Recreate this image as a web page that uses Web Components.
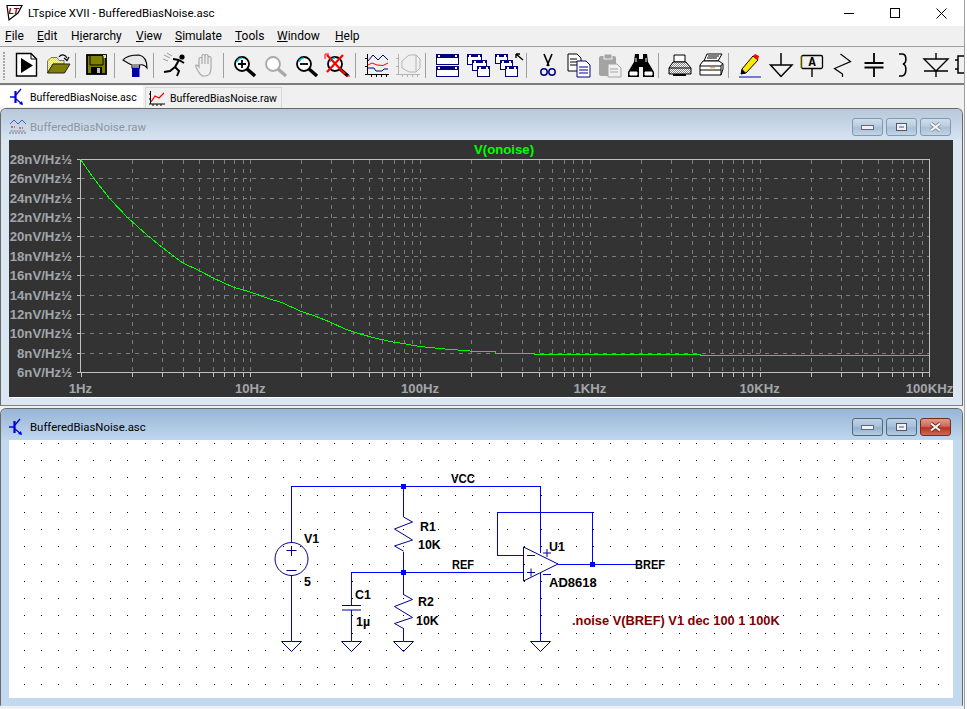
<!DOCTYPE html>
<html>
<head>
<meta charset="utf-8">
<title>LTspice XVII</title>
<style>
    html, body { margin: 0; padding: 0; background: #fff; overflow: hidden; }
    body { font-family: Roboto, "Open Sans", "Noto Sans", sans-serif; font-size: 12px; color: #000; }
</style>
</head>
<body>
<lt-app>
    <lt-titlebar slot="top" caption="LTspice XVII - BufferedBiasNoise.asc"></lt-titlebar>
    <lt-menubar slot="top">
        <lt-menu key="F" rest="ile" w="32"></lt-menu>
        <lt-menu key="E" rest="dit" w="34"></lt-menu>
        <lt-menu pre="H" key="i" rest="erarchy" w="65"></lt-menu>
        <lt-menu key="V" rest="iew" w="39"></lt-menu>
        <lt-menu key="S" rest="imulate" w="60"></lt-menu>
        <lt-menu key="T" rest="ools" w="42"></lt-menu>
        <lt-menu key="W" rest="indow" w="58"></lt-menu>
        <lt-menu key="H" rest="elp" w="36"></lt-menu>
    </lt-menubar>
    <lt-toolbar slot="top">
        <lt-tool icon="run"></lt-tool><lt-tool icon="open"></lt-tool><lt-sep></lt-sep>
        <lt-tool icon="save"></lt-tool><lt-sep></lt-sep>
        <lt-tool icon="hammer"></lt-tool><lt-sep></lt-sep>
        <lt-tool icon="runner"></lt-tool><lt-tool icon="hand"></lt-tool><lt-sep></lt-sep>
        <lt-tool icon="zoomin"></lt-tool><lt-tool icon="zoomgray"></lt-tool><lt-tool icon="zoomout"></lt-tool><lt-tool icon="zoomx"></lt-tool><lt-sep></lt-sep>
        <lt-tool icon="plot"></lt-tool><lt-tool icon="plotgray"></lt-tool><lt-sep></lt-sep>
        <lt-tool icon="tile"></lt-tool><lt-tool icon="cascade"></lt-tool><lt-tool icon="cascadearrow"></lt-tool><lt-sep></lt-sep>
        <lt-tool icon="cut"></lt-tool><lt-tool icon="copy"></lt-tool><lt-tool icon="paste"></lt-tool><lt-tool icon="find"></lt-tool><lt-sep></lt-sep>
        <lt-tool icon="print"></lt-tool><lt-tool icon="printer"></lt-tool><lt-sep></lt-sep>
        <lt-tool icon="pencil"></lt-tool><lt-tool icon="ground"></lt-tool><lt-tool icon="label"></lt-tool><lt-tool icon="res"></lt-tool><lt-tool icon="cap"></lt-tool><lt-tool icon="ind"></lt-tool><lt-tool icon="diode"></lt-tool><lt-tool icon="comp"></lt-tool>
    </lt-toolbar>
    <lt-tabs slot="top">
        <lt-tab active icon="sch" w="143">BufferedBiasNoise.asc</lt-tab>
        <lt-tab icon="wave" w="137">BufferedBiasNoise.raw</lt-tab>
    </lt-tabs>
    <lt-child caption="BufferedBiasNoise.raw" icon="wavefaded">
        <lt-plot></lt-plot>
    </lt-child>
    <lt-child active caption="BufferedBiasNoise.asc" icon="sch">
        <lt-schematic></lt-schematic>
    </lt-child>
</lt-app>

<script>
// small window used by the tile / cascade icons
const win = (x, y, w, h, bar) => `
    <rect x="${x + .5}" y="${y + .5}" width="${w}" height="${h}" fill="#fff" stroke="#000080"/>
    <rect x="${x}" y="${y}" width="${w + 1}" height="${bar}" fill="#000080"/>
    <rect x="${x + 2}" y="${y + 1}" width="2" height="2" fill="#fff"/>
    <rect x="${x + w - 3}" y="${y + 1}" width="2" height="2" fill="#fff"/>`;

const lens = (stroke, inner) => `
    <path d="M14 16L22 23" stroke="${stroke}" stroke-width="3.4" fill="none"/>
    <circle cx="9" cy="11" r="7" fill="#fff" stroke="${stroke}" stroke-width="1.8"/>
    ${inner}`;

const ICONS = {
    run: `<path d="M1.5 .5H16L21.5 6V23H1.5Z" fill="#fff" stroke="#000" stroke-width="1.4"/><path d="M16 .5V6H21.5" fill="none" stroke="#000"/><path d="M6 5L18 12.5L6 20Z" fill="#000"/>`,
    open: `<defs><pattern id="dy" width="2" height="2" patternUnits="userSpaceOnUse"><rect width="2" height="2" fill="#fff"/><rect width="1" height="1" fill="#e8e800"/><rect x="1" y="1" width="1" height="1" fill="#e8e800"/></pattern></defs>
        <path d="M1.5 20V8L5 4.5H11L13 7.5H18V11H7L1.5 20Z" fill="url(#dy)" stroke="#555" stroke-width=".8"/><path d="M1.5 20L7 11H24L18.5 20Z" fill="#808000" stroke="#222"/><path d="M13 4C15 1 19 1 21 5" fill="none" stroke="#000" stroke-width="1.2"/><path d="M18 5L21 7.5L23 4" fill="none" stroke="#000" stroke-width="1.2"/>`,
    save: `<rect x="2" y="2" width="19" height="19" fill="#808000" stroke="#000" stroke-width="1.8"/><rect x="18" y="2" width="3" height="3" fill="#ddd"/><path d="M5 12H18M5 3V12M18 3V12" stroke="#000" fill="none"/><rect x="6" y="14" width="11" height="7" fill="#000"/><rect x="12" y="15" width="3" height="5" fill="#c0c0c0"/>`,
    hammer: `<path d="M-1 7C2 3 8 2 15 2C20 3 23 8 23 15C21 12 19 11 15.5 12V15H8V12C5 11 2 9 -1 7Z" fill="#e8e8e8" stroke="#000" stroke-width="1.1"/><path d="M8.5 11H15V14.5H8.5Z" fill="#909090"/><rect x="8" y="15" width="7.5" height="9" fill="#0000a8"/>`,
    runner: `<g fill="none" stroke="#000" stroke-width="2"><circle cx="19" cy="4" r="1.6" fill="#000"/><path d="M16 7L12 14"/><path d="M16 7L21 10M16 7L10 6"/><path d="M12 14L16 18L14 23M12 14L7 18L1 19"/></g><path d="M1 2L7 5M4 0L9 3M0 6L5 8" stroke="#999" fill="none"/>`,
    hand: `<path d="M5 14V6a1.5 1.5 0 0 1 3 0V11V3a1.5 1.5 0 0 1 3 0V11V3a1.5 1.5 0 0 1 3 0V11V5a1.5 1.5 0 0 1 3 0V15C17 20 15 23 11 23H9C7 23 6 21 4 18L2 14C1 12 3 11 5 14Z" fill="#f0f0f0" stroke="#a8a8a8" stroke-width="1.2"/>`,
    zoomin: lens('#000', `<path d="M4 9A6 6 0 0 1 9 5" stroke="#00c8e0" stroke-width="1.6" fill="none"/><path d="M5 11H13M9 7V15" stroke="#000" stroke-width="1.8"/>`),
    zoomgray: lens('#a8a8a8', ''),
    zoomout: lens('#000', `<path d="M4 9A6 6 0 0 1 9 5" stroke="#00c8e0" stroke-width="1.6" fill="none"/><path d="M5 11H13" stroke="#000" stroke-width="1.8"/>`),
    zoomx: lens('#000', `<path d="M4 9A6 6 0 0 1 9 5" stroke="#00c8e0" stroke-width="1.6" fill="none"/><path d="M1 2L19 21M17 2L1 19" stroke="#f00" stroke-width="2.2"/><path d="M-1 1V6M-1 1H3M20 23H24" stroke="#f00" fill="none"/>`),
    plot: `<path d="M2.5 1V21.5H24M0 21.5H2.5M6.5 21.5V24M11.5 21.5V24M16.5 21.5V24M21.5 21.5V24M0 5.5H2.5M0 13.5H2.5" stroke="#000" fill="none"/><path d="M3 8L8 2L13 7L18 2L23 7" stroke="#000080" fill="none"/><path d="M3 12L7 10L12 12L18 12.5L23 10" stroke="#f00" fill="none"/><path d="M3 15H9L11 18H17L19 16H23" stroke="#000080" fill="none"/>`,
    plotgray: `<path d="M2.5 1V21.5H24M0 21.5H2.5M6.5 21.5V24M11.5 21.5V24M16.5 21.5V24M21.5 21.5V24M0 5.5H2.5M0 13.5H2.5" stroke="#b4b4b4" fill="none"/><path d="M6 8L13 2H20L24 6V15L20 19H13L6 15Z M20 2V19" stroke="#b4b4b4" fill="none"/>`,
    tile: win(1, 1, 22, 10, 4) + win(1, 13, 22, 10, 4),
    cascade: win(1, 1, 14, 10, 3) + win(6, 7, 14, 10, 3) + win(11, 13, 12, 10, 3),
    cascadearrow: win(-2, 1, 12, 9, 3) + win(3, 7, 12, 9, 3) + win(8, 13, 12, 10, 3) + `<path d="M19 1V5M19 1H23M19 1L26 7" stroke="#000" stroke-width="1.4" fill="none"/>`,
    cut: `<path d="M8 1L13 13M16 1L11 13" stroke="#000" stroke-width="1.6" fill="none"/><circle cx="8" cy="19" r="3.2" fill="none" stroke="#000080" stroke-width="1.5"/><circle cx="16" cy="19" r="3.2" fill="none" stroke="#000080" stroke-width="1.5"/>`,
    copy: `<path d="M1 1H10L14 5V18H1Z" fill="#fff" stroke="#000"/><path d="M3 6H10M3 9H10M3 12H10" stroke="#000"/><path d="M10 8H19L23 12V24H10Z" fill="#fff" stroke="#000080"/><path d="M12 14H21M12 17H21M12 20H21" stroke="#000080"/>`,
    paste: `<rect x="1" y="3" width="17" height="20" rx="2" fill="#a4a4a4"/><rect x="6" y="1" width="8" height="5" fill="#a4a4a4" stroke="#f0f0f0"/><path d="M10 11H19L23 15V24H10Z" fill="#f0f0f0" stroke="#a4a4a4"/><path d="M12 16H20M12 19H20" stroke="#a4a4a4"/>`,
    find: `<path d="M6 1H10V6H14V1H18L19 9L25 19V24H14V14H10V24H-1V19L5 9Z" fill="#000"/><path d="M1 19H8V22H1ZM16 19H23V22H16ZM7 5V9M17 5V9" stroke="#fff" fill="#fff"/>`,
    print: `<defs><pattern id="dg" width="2" height="2" patternUnits="userSpaceOnUse"><rect width="2" height="2" fill="#fff"/><rect width="1" height="1" fill="#888"/><rect x="1" y="1" width="1" height="1" fill="#888"/></pattern></defs><path d="M6 2H17V9H6Z" fill="#fff" stroke="#000"/><path d="M5 9H18L23 15V21H1V15Z" fill="url(#dg)" stroke="#000"/><path d="M1 15H23" stroke="#000"/><rect x="5" y="21" width="13" height="2" fill="#000"/>`,
    printer: `<path d="M8 1H23L19 8H5Z" fill="#fff" stroke="#000"/><path d="M9 3H20M8 5H18" stroke="#000"/><path d="M4 8H20L24 11V16L22 22H1V12Z" fill="#fff" stroke="#000"/><path d="M1 13H22L24 10M1 17H22M22 13V22" stroke="#000" fill="none"/><rect x="11" y="14" width="5" height="1.4" fill="#e8c800"/><rect x="11" y="16" width="4" height="1" fill="#888"/>`,
    pencil: `<path d="M4 16L15 3L20 7L8 20L3 21Z" fill="#ffe800" stroke="#000"/><path d="M15 3L17 1L21 3L20 7Z" fill="#f00"/><path d="M3 21L8 20L4 16Z" fill="#000"/><path d="M1 24H23" stroke="#0000c8"/>`,
    ground: `<path d="M12 0V12M1.5 12H23L12 23.5Z" fill="none" stroke="#000" stroke-width="1.5"/>`,
    label: `<rect x="1.5" y="2.5" width="21" height="13" rx="1.5" fill="#f0f0f0" stroke="#000" stroke-width="1.3"/><path d="M1 3V15" stroke="#a8a800"/><path d="M12 16V24" stroke="#000" stroke-width="1.4"/><text x="12" y="13" font-family="Liberation Mono, monospace" font-size="12" font-weight="700" text-anchor="middle">A</text>`,
    res: `<path d="M9.5 1L19.5 8.5L3.5 15.5L11.5 21V24" fill="none" stroke="#000" stroke-width="1.2"/>`,
    cap: `<path d="M12 0V10M2.5 10H21.5M2.5 14.5H21.5M12 14.5V24" fill="none" stroke="#000" stroke-width="1.8"/>`,
    ind: `<path d="M6 1H9C14 1 14 10 10 11C14 12 14 22 9 23H6" fill="none" stroke="#000" stroke-width="1.6"/>`,
    diode: `<path d="M12 0V6M0 6H24L12 18ZM0 18H24M12 18V24" fill="none" stroke="#000" stroke-width="1.4"/>`,
    comp: `<path d="M0 7H3M0 16H3M3 3H12V20H3Z" fill="none" stroke="#000" stroke-width="1.5"/>`,
    sch: `<path d="M0 8H5" stroke="#0000ff" stroke-width="1.5"/><path d="M5.5 2V14" stroke="#0000c8" stroke-width="2.2"/><path d="M6 6L11 0M6 10L12 15" stroke="#0000c8" stroke-width="1.2"/><path d="M13 16L9 15L12 12Z" fill="#0000ff"/>`,
    wave: `<path d="M1.5 1V14H16M0 14H1.5M4 14V16M8 14V16M12 14V16M0 4H1.5M0 9H1.5" stroke="#000" fill="none"/><path d="M2 12L6 6L10 8L15 3" stroke="#f00" stroke-width="1.3" fill="none"/>`,
    wavefaded: `<path d="M1.5 12H16M0 14H17" stroke="#707070" fill="none" stroke-dasharray="2 1"/><path d="M1 5L5 1L9 5L13 1L17 5" stroke="#4060c0" fill="none"/><path d="M2 8H6M10 9H14" stroke="#e04040" stroke-width="1.4" stroke-dasharray="2 1"/>`
};

const ICON_BOX = { sch: [14, 17], wave: [18, 17], wavefaded: [18, 16] };

function iconSvg(name, w, h) {
    return `<svg xmlns="http://www.w3.org/2000/svg" width="${w}" height="${h}" viewBox="0 0 ${w} ${h}" style="overflow:visible;display:block">${ICONS[name]}</svg>`;
}

class LtApp extends HTMLElement {
    constructor() {
        super();
        this.attachShadow({ mode: 'open' });
        this.shadowRoot.innerHTML = `
            <style>
                :host { display: flex; flex-direction: column; width: 964px; height: 709px; border-right: 1px solid #a0a0a0; }
                .mdi { display: flex; flex-direction: column; gap: 2px; background: #f0f0f0; flex: 1; padding-right: 1px; }
            </style>
            <slot name="top"></slot>
            <div class="mdi"><slot></slot></div>
        `;
    }
}

class LtTitlebar extends HTMLElement {
    constructor() {
        super();
        this.attachShadow({ mode: 'open' });
        this.shadowRoot.innerHTML = `
            <style>
                :host { display: flex; align-items: center; height: 26px; background: #fff; }
                .logo { margin: 0 6px 0 6px; width: 16px; height: 16px; }
                .cap { font-size: 11.45px; flex: 1; color: #000; }
                .btn { width: 46px; height: 26px; display: flex; align-items: center; justify-content: center; }
            </style>
            <svg class="logo" viewBox="0 0 16 16" style="overflow:visible">
                <path d="M1 .5H16L12 8L3 15Z" fill="#fff" stroke="#000" stroke-width="1.2"/>
                <text x="2.5" y="8.5" font-family="Liberation Sans, sans-serif" font-size="9" font-weight="700" font-style="italic" fill="#800000">LT</text>
            </svg>
            <span class="cap"></span>
            <div class="btn"><svg width="10" height="10"><path d="M0 5.5H10" stroke="#000"/></svg></div>
            <div class="btn"><svg width="10" height="10"><rect x=".5" y=".5" width="9" height="9" fill="none" stroke="#000"/></svg></div>
            <div class="btn"><svg width="11" height="11"><path d="M.5 .5L10.5 10.5M10.5 .5L.5 10.5" stroke="#000" fill="none"/></svg></div>
        `;
        this.shadowRoot.querySelector('.cap').textContent = this.getAttribute('caption');
    }
}

class LtMenubar extends HTMLElement {
    constructor() {
        super();
        this.attachShadow({ mode: 'open' });
        this.shadowRoot.innerHTML = `
            <style>
                :host { display: flex; align-items: center; height: 20px; padding-left: 5px; background: #f0f0f0; border-bottom: 1px solid #a0a0a0; }
            </style>
            <slot></slot>
        `;
    }
}

class LtMenu extends HTMLElement {
    constructor() {
        super();
        this.attachShadow({ mode: 'open' });
        const pre = this.getAttribute('pre') || '';
        this.shadowRoot.innerHTML = `
            <style>
                :host { display: block; width: ${this.getAttribute('w')}px; font-size: 12px; }
            </style>
            ${pre}<u>${this.getAttribute('key')}</u>${this.getAttribute('rest')}
        `;
    }
}

class LtToolbar extends HTMLElement {
    constructor() {
        super();
        this.attachShadow({ mode: 'open' });
        this.shadowRoot.innerHTML = `
            <style>
                :host { display: flex; height: 36px; padding-left: 3px; background: #f0f0f0; border-bottom: 2px solid #7c7c7c; overflow: hidden; }
                .grip { width: 3px; margin: 5px 5px 3px 0; flex: none; background: radial-gradient(circle at 1px 1px, #a8a8a8 1px, transparent 1.2px) 0 0 / 3px 3px; }
            </style>
            <div class="grip"></div>
            <slot></slot>
        `;
    }
}

class LtTool extends HTMLElement {
    constructor() {
        super();
        this.attachShadow({ mode: 'open' });
        this.shadowRoot.innerHTML = `
            <style>
                :host { display: block; width: 31px; height: 36px; flex: none; padding: 6px 3.5px 0; box-sizing: border-box; }
            </style>
            ${iconSvg(this.getAttribute('icon'), 24, 24)}
        `;
    }
}

class LtSep extends HTMLElement {
    constructor() {
        super();
        this.attachShadow({ mode: 'open' });
        this.shadowRoot.innerHTML = `
            <style>
                :host { display: block; width: 8px; flex: none; box-sizing: border-box; padding: 6px 5px 5px 2px; }
                div { width: 1px; height: 100%; background: #a0a0a0; }
            </style>
            <div></div>
        `;
    }
}

class LtTabs extends HTMLElement {
    constructor() {
        super();
        this.attachShadow({ mode: 'open' });
        this.shadowRoot.innerHTML = `
            <style>
                :host { display: flex; align-items: flex-start; gap: 2px; height: 23px; padding-top: 1px; box-sizing: border-box; background: #f0f0f0; }
            </style>
            <slot></slot>
        `;
    }
}

class LtTab extends HTMLElement {
    constructor() {
        super();
        this.attachShadow({ mode: 'open' });
        const name = this.getAttribute('icon');
        this.shadowRoot.innerHTML = `
            <style>
                :host { display: flex; align-items: center; box-sizing: border-box; width: ${this.getAttribute('w')}px; height: 21px; font-size: 10.5px; padding-left: 3px; margin-top: 1px; border: 1px solid #d8d8d8; border-bottom: 0; }
                :host([active]) { height: 21px; margin-top: 0; background: #fff; border-color: #fff; padding-left: 9px; }
                svg { flex: none; }
                .t { margin-left: 3px; white-space: nowrap; }
                :host([active]) .t { margin-left: 6px; }
            </style>
            ${iconSvg(name, ICON_BOX[name][0], ICON_BOX[name][1])}
            <span class="t"><slot></slot></span>
        `;
    }
}

class LtChild extends HTMLElement {
    constructor() {
        super();
        this.attachShadow({ mode: 'open' });
        const name = this.getAttribute('icon');
        this.shadowRoot.innerHTML = `
            <style>
                :host { display: flex; flex-direction: column; box-sizing: border-box; height: 298px; border: 1px solid #6a6a6a; border-bottom-color: #808080; border-radius: 6px 6px 0 0; background: #dae6f2; }
                :host([active]) { background: #c2d9ef; border-bottom-color: #c2d9ef; }
                .head { display: flex; align-items: center; box-sizing: border-box; height: 31px; flex: none; padding: 5px 11px 0 8px; border-radius: 5px 5px 0 0; background: linear-gradient(#b8c8da, #d6e4f2); color: #8c96a0; font-size: 11.4px; }
                :host([active]) .head { background: linear-gradient(#97b5d5, #bfd7ee); color: #000; }
                .head svg { flex: none; }
                .cap { margin-left: 3px; flex: 1; }
                .b { box-sizing: border-box; width: 31px; height: 18px; margin-left: 3px; display: flex; align-items: center; justify-content: center; border: 1px solid #7f98b4; border-radius: 3px; background: linear-gradient(#d0deeb 0, #b9ccdf 45%, #a9c0d7 55%, #c2d4e6 100%); }
                :host([active]) .b { background: linear-gradient(#bcd2e7 0, #a8c2dc 45%, #94b2d0 55%, #b4cde4 100%); border-color: #567; }
                :host([active]) .b.x { background: linear-gradient(#e09a8c 0, #cf6a58 45%, #b8341f 55%, #cc6a55 100%); border-color: #7a2a1c; }
                .x .o { stroke: #7d8a98; }
                :host([active]) .x .o { stroke: #6a2014; }
                .body { flex: 1; min-height: 0; padding: 0 9px 7px 8px; }
            </style>
            <div class="head">
                ${iconSvg(name, 18, 16)}
                <span class="cap"></span>
                <div class="b"><svg width="13" height="8"><rect x=".5" y="2.5" width="12" height="4" fill="#eef2f6" stroke="#667"/></svg></div>
                <div class="b"><svg width="13" height="10"><rect x="1.5" y="1.5" width="10" height="7" fill="#eef2f6" stroke="#556"/><rect x="4" y="4" width="5" height="2" fill="#8ea8c2"/></svg></div>
                <div class="b x"><svg width="13" height="10"><path class="o" d="M2 1.5L11 8.5M11 1.5L2 8.5" stroke-width="3.6"/><path d="M2 1.5L11 8.5M11 1.5L2 8.5" stroke="#f4f4f4" stroke-width="2.2"/></svg></div>
            </div>
            <div class="body"><slot></slot></div>
        `;
        this.shadowRoot.querySelector('.cap').textContent = this.getAttribute('caption');
    }
}

class LtPlot extends HTMLElement {
    constructor() {
        super();
        this.attachShadow({ mode: 'open' });
        const left = 80.5, right = 929.5, top = 159.5, bottom = 372.5;
        const decade = (right - left) / 5;
        let grid = '', frame = '', labels = '';

        for (let d = 0; d < 5; d++) {
            for (let k = 1; k < 10; k++) {
                const x = Math.round(left + (d + Math.log10(k)) * decade) + .5;
                if (k > 1 || d > 0) grid += `<path d="M${x} ${top}V${bottom}"/>`;
                frame += `<path d="M${x} ${bottom}V${bottom + 4}"/>`;
            }
        }
        frame += `<path d="M${right} ${bottom}V${bottom + 4}"/>`;

        ['1Hz', '10Hz', '100Hz', '1KHz', '10KHz', '100KHz'].forEach((t, i) => {
            labels += `<text x="${left + i * decade}" y="393" text-anchor="middle">${t}</text>`;
        });

        for (let i = 0; i <= 11; i++) {
            const y = Math.round(top + i * (bottom - top) / 11 - .5) + .5;
            if (i > 0 && i < 11) grid += `<path d="M${left} ${y}H${right}"/>`;
            frame += `<path d="M${left - 4} ${y}H${left}"/>`;
            labels += `<text x="72" y="${y + 4.5}" text-anchor="end">${28 - i * 2}nV/Hz½</text>`;
        }

        const curve = [[80.5,159.5],[95,180],[110,199],[128,218],[147,235],[163,248],[183,263],[200,271],[213,278],[233,287],[250,292],[267,298],[283,303],[300,311],[315,316],[330,322],[345,329],[360,334],[375,338],[390,341.5],[400,343],[420,346.5],[445,349],[470,351]]
            .map(p => p.join(',')).join(' ');

        this.shadowRoot.innerHTML = `
            <style>
                :host { display: block; height: 100%; border-bottom: 1px solid #fff; box-sizing: border-box; }
                svg { display: block; }
                text { font: 700 13.2px "Liberation Sans", Arial, sans-serif; fill: #a2a6aa; }
                .title { fill: #00ff00; }
            </style>
            <svg width="944" height="257" viewBox="9 140 944 257">
                <rect x="9" y="140" width="944" height="257" fill="#333"/>
                <g stroke="#7c7c7c" stroke-dasharray="4 5" shape-rendering="crispEdges">${grid}</g>
                <g stroke="#c0c0c0" shape-rendering="crispEdges">
                    <rect x="${left}" y="${top}" width="${right - left}" height="${bottom - top}" fill="none"/>
                    ${frame}
                </g>
                <polyline points="${curve}" fill="none" stroke="#00ff00" stroke-width="1" shape-rendering="crispEdges"/>
                <path d="M470 351.5H495V353.5H534V354.5H700V355.5H929" fill="none" stroke="#00ff00" shape-rendering="crispEdges"/>
                ${labels}
                <text class="title" x="504" y="154" text-anchor="middle">V(onoise)</text>
            </svg>
        `;
    }
}

class LtSchematic extends HTMLElement {
    constructor() {
        super();
        this.attachShadow({ mode: 'open' });
        let dots = '';
        for (let r = 0; r < 15; r++) {
            for (let c = 0; c < 54; c++) {
                dots += `M${Math.round(24 + c * 17.24)} ${Math.round(443 + r * 17.24)}h1v1h-1z`;
            }
        }
        const gnd = x => `<path d="M${x} 641.5H${x - 10}L${x} 651.5L${x + 10} 641.5Z"/>`;
        const zig = (x, y) => `<path d="M${x} ${y}L${x + 9} ${y + 5}L${x - 9} ${y + 12}L${x + 9} ${y + 23}L${x - 9} ${y + 29}L${x} ${y + 34}"/>`;
        // fit = width of the word in the reference, for the net names that run narrow
        const label = (x, y, t, fit) => `<text x="${x}" y="${y}"${fit ? ` textLength="${fit}" lengthAdjust="spacingAndGlyphs"` : ''}>${t}</text>`;

        this.shadowRoot.innerHTML = `
            <style>
                :host { display: block; height: 100%; }
                svg { display: block; }
                text { font: 700 12.4px "Liberation Sans", Arial, sans-serif; fill: #000; }
                .wide { font-size: 13px; }
                .dir { font-size: 12.85px; fill: #800000; }
            </style>
            <svg width="944" height="258" viewBox="9 440 944 258">
                <rect x="9" y="440" width="944" height="258" fill="#fff"/>
                <path d="${dots}" fill="#000"/>
                <g fill="none" stroke="#0000ff" shape-rendering="crispEdges">
                    <path d="M291.5 543V486.5H540.5V553"/>
                    <path d="M403.5 486.5V517M403.5 552V595M403.5 628V641"/>
                    <path d="M291.5 575V641"/>
                    <path d="M351.5 605V572.5H523M351.5 610V641"/>
                    <path d="M523 555.5H497.5V512.5H592.5V564.5"/>
                    <path d="M558 564.5H636"/>
                    <path d="M540.5 573V641"/>
                </g>
                <g fill="#0000ff">
                    <rect x="401" y="484" width="5" height="5"/>
                    <rect x="401" y="570" width="5" height="5"/>
                    <rect x="590" y="562" width="5" height="5"/>
                </g>
                <g fill="none" stroke="#000090">
                    <circle cx="291.5" cy="559" r="16.5"/>
                    <path d="M291.5 546V556M286.5 550.5H296.5M286.5 570.5H296.5"/>
                    ${zig(403.5, 517)}
                    ${zig(403.5, 594.5)}
                    <path d="M342 605.5H361M342 610H361" stroke-width="1.2"/>
                    <path d="M523.5 547V581L558 564Z"/>
                    <path d="M527 555.5H535M527 572.5H535M531 568.5V576.5"/>
                    <path d="M543 553H551M547 549V557M543 574.5H551"/>
                    ${gnd(291.5)}${gnd(351.5)}${gnd(403.5)}${gnd(540.5)}
                </g>
                ${label(304, 543, 'V1')}
                ${label(304, 586, '5')}
                ${label(420, 531, 'R1')}
                ${label(418, 549, '10K')}
                ${label(418, 606, 'R2')}
                ${label(416, 625, '10K')}
                ${label(355, 599, 'C1')}
                ${label(356, 626, '1µ')}
                ${label(451, 483, 'VCC', 24)}
                ${label(452, 569, 'REF', 22)}
                ${label(549, 551, 'U1')}
                <text class="wide" x="549" y="587">AD8618</text>
                ${label(635, 569, 'BREF', 30)}
                <text class="dir" x="572" y="625">.noise V(BREF) V1 dec 100 1 100K</text>
            </svg>
        `;
    }
}

customElements.define('lt-app', LtApp);
customElements.define('lt-titlebar', LtTitlebar);
customElements.define('lt-menubar', LtMenubar);
customElements.define('lt-menu', LtMenu);
customElements.define('lt-toolbar', LtToolbar);
customElements.define('lt-tool', LtTool);
customElements.define('lt-sep', LtSep);
customElements.define('lt-tabs', LtTabs);
customElements.define('lt-tab', LtTab);
customElements.define('lt-child', LtChild);
customElements.define('lt-plot', LtPlot);
customElements.define('lt-schematic', LtSchematic);
</script>
</body>
</html>
